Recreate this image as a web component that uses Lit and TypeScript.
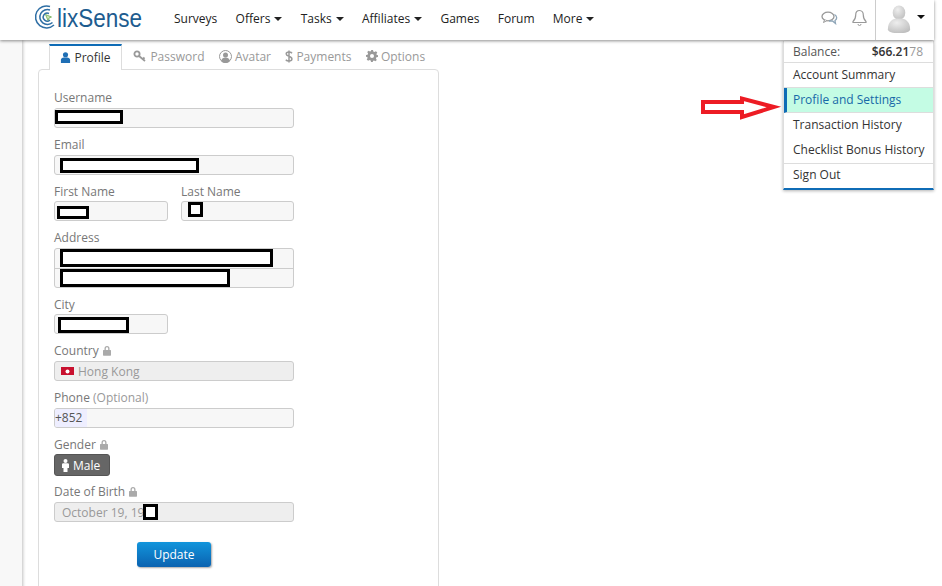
import { LitElement, html, css } from "lit";
import { customElement } from "lit/decorators.js";

const caret = html`<i class="caret"></i>`;
const lock = html`<svg class="lock" viewBox="0 0 10 11"><path d="M2.500 5V3.400a2.500 2.500 0 0 1 5 0V5h.9c.4 0 .6.3.6.6v4.500c0 .4-.2.6-.6.6H1.600c-.4 0-.6-.2-.6-.6V5.600c0-.3.2-.6.6-.6zm1.300 0h2.400V3.400a1.200 1.200 0 0 0-2.400 0z" fill="#aaa"/></svg>`;

@customElement("app-root")
export class AppRoot extends LitElement {
  static styles = css`
    :host { display: block; width: 942px; height: 586px; overflow: hidden; position: relative; background: #fff;
      font-family: "Open Sans", sans-serif; font-size: 12px; color: #666; }
    .header { height: 40px; width: 934px; background: #fff; box-shadow: 0 1px 3px rgba(0,0,0,.45); display: flex; align-items: center; position: relative; z-index: 3; box-sizing: border-box; }
    .logo { margin-left: 33px; width: 115px; display: flex; align-items: center; height: 40px; color: #1d5c8f; font-family: "Liberation Sans", sans-serif; font-size: 25px; }
    .logo svg { width: 24px; height: 26px; margin-top: -6px; flex: none; }
    .logo span { margin-top: -3px; transform: scaleX(.9); transform-origin: left; white-space: nowrap; }
    .nav { margin-left: 26px; display: flex; gap: 18.300px; color: #222; padding-bottom: 4px; }
    .nav span { white-space: nowrap; }
    .caret { display: inline-block; width: 0; height: 0; border: 4px solid transparent; border-top: 4px solid #222; border-bottom: 0; margin-left: 4px; vertical-align: 2px; }
    .hright { margin-left: auto; display: flex; height: 40px; align-items: center; }
    .hright .ic { margin-top: -5px; }
    .chat { margin-right: 14px; }
    .bell { margin-right: 8px; }
    .user { width: 59px; height: 40px; border-left: 1px solid #ccc; display: flex; align-items: center; box-sizing: border-box; padding-left: 9px; }
    .user svg { margin-top: -2px; }
    .user .caret { margin-left: 4px; margin-top: -7px; vertical-align: 0; border-top-color: #111; }
    .body { display: grid; grid-template-columns: 22px 912px; height: 546px; }
    .gutter { background: #f8f8f8; box-shadow: 1px 0 3px rgba(0,0,0,.25); position: relative; z-index: 1; }
    .main { padding: 3px 0 0 16px; position: relative; background: #fff; }
    .tabs { display: flex; height: 26px; margin-left: 11px; color: #999; align-items: center; }
    .tab { display: flex; align-items: center; gap: 3px; white-space: nowrap; margin-left: 14.400px; height: 26px; }
    .tab svg { flex: none; }
    .tab.active { margin-left: 0; margin-right: -3px; width: 71px; border-top: 2px solid #0f6cb6; border-left: 1px solid #ddd; border-right: 1px solid #ddd; height: 24px; justify-content: center; color: #333; background: #fff; margin-bottom: -1px; position: relative; z-index: 1; }
    .card { width: 401px; border: 1px solid #ddd; border-radius: 4px; box-sizing: border-box; height: 600px; padding: 20px 0 0 15px; }
    .group { margin-bottom: 9px; width: 240px; }
    .group.tight { margin-bottom: 8px; }
    .label { height: 18px; line-height: 16px; color: #777; white-space: nowrap; display: flex; align-items: flex-start; gap: 3px; }
    .label.low { line-height: 18px; }
    .label em { font-style: normal; color: #999; }
    .lock { width: 10px; height: 11px; margin-top: 2px; flex: none; }
    .label.low .lock { margin-top: 3px; }
    .field { height: 20px; width: 240px; background: #f7f7f7; border: 1px solid #ccc; border-radius: 3px; box-sizing: border-box; display: flex; align-items: center; position: relative; }
    .addr { height: 40px; flex-direction: column; align-items: stretch; }
    .line { height: 19px; }
    .line + .line { border-top: 1px solid #ccc; }
    .two { display: grid; grid-template-columns: 114px 113px; gap: 13px; }
    .two .field { width: auto; }
    .half { width: 114px; }
    .disabled { background: #eee; color: #999; }
    .black { position: absolute; border: 3px solid #000; background: #fff; box-sizing: border-box; }
    .b1 { left: 0; top: 1px; width: 68px; height: 14px; }
    .b2 { left: 5px; top: 2px; width: 139px; height: 15px; }
    .b3 { left: 2px; top: 4px; width: 32px; height: 13px; }
    .b4 { left: 6px; top: 0; width: 15px; height: 15px; }
    .b5 { left: 5px; top: 0; width: 213px; height: 18px; }
    .b6 { left: 5px; top: 20px; width: 170px; height: 18px; }
    .b7 { left: 3px; top: 2px; width: 71px; height: 16px; }
    .b8 { left: 88px; top: 1px; width: 15px; height: 16px; }
    .flag { width: 13px; height: 8px; background: #c8102e; margin: 0 4px 0 6px; display: flex; align-items: center; justify-content: center; }
    .prefix { background: #eef; height: 18px; width: 32px; line-height: 18px; color: #555; border-radius: 2px 0 0 2px; }
    .male { width: 56px; height: 22px; box-sizing: border-box; background: #666; border: 1px solid #555; border-radius: 3px; color: #fff; display: flex; align-items: center; padding-left: 6px; gap: 3px; }
    .dob { padding-left: 7px; }
    .dobgroup { margin-bottom: 20px; }
    .update { width: 74px; height: 25px; margin-left: 83px; display: flex; align-items: center; justify-content: center; color: #fff; border-radius: 3px; background: linear-gradient(#1295dc, #0a62b0); box-shadow: 1px 1px 2px rgba(0,0,0,.35); }
    .menu { position: absolute; left: 783px; top: 41px; width: 151px; height: 149px; background: #fff; border: 1px solid #ddd; border-top: 0; border-bottom: 2px solid #0f6cb6; box-sizing: border-box; box-shadow: 0 1px 3px rgba(0,0,0,.3); z-index: 2; color: #333; }
    .row { padding: 0 0 2px 9px; box-sizing: border-box; white-space: nowrap; display: flex; align-items: center; height: 25px; }
    .bal { height: 22px; border-bottom: 1px solid #ddd; padding: 0 10px 0 9px; justify-content: space-between; color: #555; }
    .bal b { font-weight: 600; color: #333; }
    .bal b span { font-weight: 400; color: #999; }
    .acct { border-bottom: 1px solid #ddd; }
    .sel { background: #c4fce4; color: #1769a8; border-left: 3px solid #0f6cb6; padding-left: 6px; border-bottom: 1px solid #ddd; }
    .out { border-top: 1px solid #ddd; padding-bottom: 4px; }
    .arrow { position: absolute; left: 700px; top: 95px; z-index: 2; }
  `;

  person(color: string, size = 11) {
    return html`<svg width=${size} height=${size} viewBox="0 0 12 12"><circle cx="6" cy="3" r="2.800" fill=${color}/><path d="M1 12V8.500C1 7 2.500 6.200 4 6h4c1.500.2 3 1 3 2.500V12z" fill=${color}/></svg>`;
  }

  render() {
    return html`
      <div class="header">
        <div class="logo">
          <svg viewBox="0 0 24 26">
            <path d="M17 2.500A11 11 0 1 0 21 21M17 6A7.500 7.500 0 1 0 19.500 18.500M16 9.500A4 4 0 1 0 17 16" fill="none" stroke="#2f6fa5" stroke-width="1.500"/>
            <path d="M12.500 10.500l6 2.500-2.500 1-1 2.500z" fill="#cfe6b8" stroke="#6aa84f" stroke-width=".8"/>
          </svg>
          <span>lixSense</span>
        </div>
        <div class="nav">
          <span>Surveys</span><span>Offers${caret}</span><span>Tasks${caret}</span><span>Affiliates${caret}</span><span>Games</span><span>Forum</span><span>More${caret}</span>
        </div>
        <div class="hright">
          <svg class="ic chat" width="17" height="14" viewBox="0 0 17 14"><ellipse cx="7" cy="5.500" rx="6" ry="4.300" fill="#fff" stroke="#999" stroke-width="1.300"/><path d="M3.500 9l-1 2.500 3.500-2" fill="#fff" stroke="#999"/><path d="M13.500 3.500C16 5 16.500 8 14 9.500l.5 3-3-2.500H8" fill="none" stroke="#8fa6b8" stroke-width="1.300"/></svg>
          <svg class="ic bell" width="15" height="17" viewBox="0 0 15 17"><path d="M7.500 1.500c-2.500 0-3.800 2-3.800 4.500 0 3-1 5-2.700 6.500v1h13v-1C12.300 11 11.300 9 11.300 6c0-2.500-1.300-4.500-3.800-4.500z" fill="#fff" stroke="#999" stroke-width="1.200"/><path d="M6 15a1.500 1.500 0 0 0 3 0" fill="none" stroke="#999"/></svg>
          <div class="user">
            <svg width="28" height="28" viewBox="0 0 25 29"><defs><radialGradient id="g" cx=".4" cy=".3" r=".8"><stop offset="0" stop-color="#eee"/><stop offset="1" stop-color="#bbb"/></radialGradient></defs><ellipse cx="12.500" cy="8" rx="6.500" ry="7.500" fill="url(#g)"/><path d="M1 25c0-7 4-10 8-11h7c4 1 8 4 8 11 0 3-5 4-11.500 4S1 28 1 25z" fill="url(#g)"/></svg>
            ${caret}
          </div>
        </div>
      </div>
      <div class="body">
        <div class="gutter"></div>
        <div class="main">
          <div class="tabs">
            <div class="tab active">${this.person("#1f6fb5")}<span>Profile</span></div>
            <div class="tab"><svg width="14" height="12" viewBox="0 0 14 12"><circle cx="4" cy="4" r="2.600" fill="none" stroke="#999" stroke-width="1.800"/><path d="M6 6l6 5M10 9l1.500-1.500" stroke="#999" stroke-width="1.800" fill="none"/></svg><span>Password</span></div>
            <div class="tab"><svg width="13" height="13" viewBox="0 0 13 13"><circle cx="6.500" cy="6.500" r="6" fill="#fff" stroke="#999"/><circle cx="6.500" cy="5" r="2.500" fill="#999"/><path d="M2 11c.5-2.500 2.500-3.500 4.500-3.500S10.500 8.500 11 11a6 6 0 0 1-9 0z" fill="#999"/></svg><span>Avatar</span></div>
            <div class="tab"><svg width="8" height="13" viewBox="0 0 8 13"><path d="M7 3.200C6.300 2.300 5.200 2 4 2 2.500 2 1.200 2.700 1.200 4S2.500 5.800 4 6.300 6.900 7.500 6.900 9 5.500 11 4 11c-1.300 0-2.500-.4-3.200-1.300M4 .5v12" fill="none" stroke="#999" stroke-width="1.500"/></svg><span>Payments</span></div>
            <div class="tab"><svg width="12" height="12" viewBox="0 0 12 12"><path d="M5 0h2l.3 1.600 1.200.5L9.900 1.200l1.400 1.400-.9 1.400.5 1.200L12 5v2l-1.600.3-.5 1.200.9 1.400-1.400 1.400-1.400-.9-1.200.5L7 12H5l-.3-1.600-1.200-.5-1.400.9L.7 9.400l.9-1.400-.5-1.200L0 7V5l1.600-.3.5-1.200-.9-1.400L2.600.7l1.400.9 1.200-.5zM6 4a2 2 0 1 0 0 4 2 2 0 0 0 0-4z" fill="#999" fill-rule="evenodd"/></svg><span>Options</span></div>
          </div>
          <div class="card">
            <div class="group"><div class="label">Username</div><div class="field"><div class="black b1"></div></div></div>
            <div class="group tight"><div class="label">Email</div><div class="field"><div class="black b2"></div></div></div>
            <div class="group two">
              <div><div class="label low">First Name</div><div class="field"><div class="black b3"></div></div></div>
              <div><div class="label low">Last Name</div><div class="field"><div class="black b4"></div></div></div>
            </div>
            <div class="group tight"><div class="label">Address</div><div class="field addr"><div class="line"></div><div class="line"></div><div class="black b5"></div><div class="black b6"></div></div></div>
            <div class="group"><div class="label low">City</div><div class="field half"><div class="black b7"></div></div></div>
            <div class="group"><div class="label">Country ${lock}</div><div class="field disabled"><span class="flag"><svg width="5" height="5" viewBox="0 0 5 5"><circle cx="2.500" cy="2.500" r="2" fill="#fff"/></svg></span>Hong Kong</div></div>
            <div class="group tight"><div class="label"><span>Phone <em>(Optional)</em></span></div><div class="field"><span class="prefix">+852</span></div></div>
            <div class="group tight"><div class="label low">Gender ${lock}</div><div class="male"><svg width="9" height="13" viewBox="0 0 9 13"><circle cx="4.500" cy="2" r="2" fill="#fff"/><path d="M1 5.500C1 4.700 1.700 4.300 2.500 4.300h4C7.300 4.300 8 4.700 8 5.500V9H6.500v4h-4V9H1z" fill="#fff"/></svg>Male</div></div>
            <div class="group dobgroup"><div class="label">Date of Birth ${lock}</div><div class="field disabled dob">October 19, 19<div class="black b8"></div></div></div>
            <div class="update">Update</div>
          </div>
        </div>
      </div>
      <div class="menu">
        <div class="row bal"><span>Balance:</span><b>$66.21<span>78</span></b></div>
        <div class="row acct">Account Summary</div>
        <div class="row sel">Profile and Settings</div>
        <div class="row">Transaction History</div>
        <div class="row">Checklist Bonus History</div>
        <div class="row out">Sign Out</div>
      </div>
      <svg class="arrow" width="82" height="26" viewBox="0 0 82 26"><path d="M3 7H42V3.500L74 12 42 22V17H3z" fill="#fff" stroke="#ed1c24" stroke-width="4"/></svg>
    `;
  }
}
